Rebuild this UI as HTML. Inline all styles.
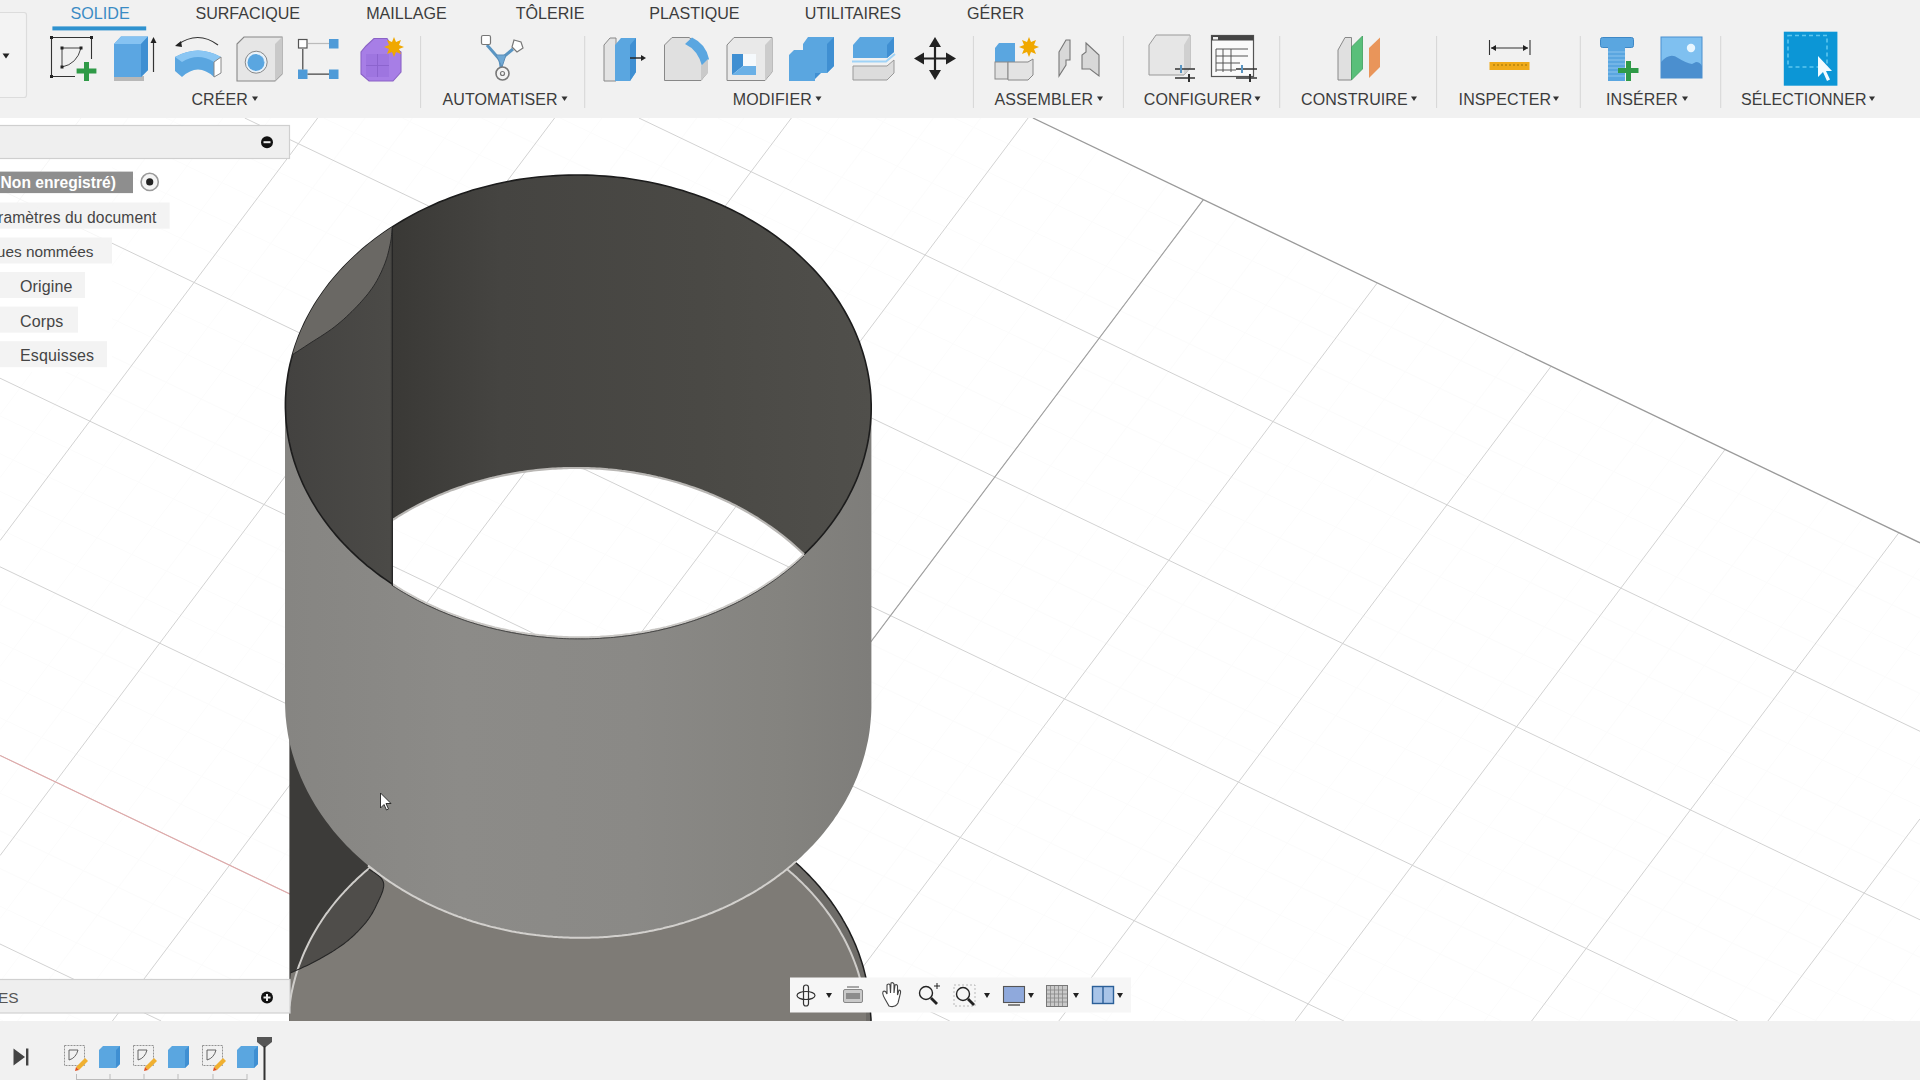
<!DOCTYPE html>
<html><head><meta charset="utf-8">
<style>
html,body{margin:0;padding:0;width:1920px;height:1080px;overflow:hidden;background:#f1f1f1;font-family:"Liberation Sans",sans-serif;}
svg{position:absolute;left:0;top:0;}
.t{font-family:"Liberation Sans",sans-serif;}
</style></head><body>
<svg width="1920" height="1080" viewBox="0 0 1920 1080">
<defs>
  <clipPath id="vp"><rect x="0" y="118" width="1920" height="903"/></clipPath>
  <clipPath id="holeclip"><path d="M392.6 519.9 L395.4 518.2 L398.1 516.4 L400.9 514.8 L403.6 513.1 L406.4 511.5 L409.2 509.9 L411.9 508.4 L414.7 506.9 L417.4 505.5 L420.2 504.1 L423 502.7 L425.7 501.3 L428.5 500 L431.3 498.7 L434 497.5 L436.8 496.3 L439.5 495.1 L442.3 493.9 L445.1 492.8 L447.8 491.7 L450.6 490.6 L453.3 489.6 L456.1 488.6 L458.9 487.6 L461.6 486.7 L464.4 485.7 L467.1 484.8 L469.9 483.9 L472.7 483.1 L475.4 482.3 L478.2 481.5 L481 480.7 L483.7 480 L486.5 479.2 L489.2 478.5 L492 477.9 L494.8 477.2 L497.5 476.6 L500.3 476 L503 475.4 L505.8 474.8 L508.6 474.3 L511.3 473.8 L514.1 473.3 L516.8 472.8 L519.6 472.4 L522.4 472 L525.1 471.6 L527.9 471.2 L530.7 470.8 L533.4 470.5 L536.2 470.2 L538.9 469.9 L541.7 469.6 L544.5 469.3 L547.2 469.1 L550 468.9 L552.7 468.7 L555.5 468.6 L558.3 468.4 L561 468.3 L563.8 468.2 L566.5 468.1 L569.3 468 L572.1 468 L574.8 468 L577.6 468 L580.4 468 L583.1 468.1 L585.9 468.1 L588.6 468.2 L591.4 468.3 L594.2 468.4 L596.9 468.6 L599.7 468.7 L602.4 468.9 L605.2 469.1 L608 469.4 L610.7 469.6 L613.5 469.9 L616.2 470.2 L619 470.5 L621.8 470.9 L624.5 471.2 L627.3 471.6 L630.1 472 L632.8 472.4 L635.6 472.9 L638.3 473.3 L641.1 473.8 L643.9 474.3 L646.6 474.9 L649.4 475.4 L652.1 476 L654.9 476.6 L657.7 477.3 L660.4 477.9 L663.2 478.6 L665.9 479.3 L668.7 480 L671.5 480.8 L674.2 481.5 L677 482.3 L679.8 483.1 L682.5 484 L685.3 484.9 L688 485.8 L690.8 486.7 L693.6 487.6 L696.3 488.6 L699.1 489.6 L701.8 490.6 L704.6 491.7 L707.4 492.8 L710.1 493.9 L712.9 495.1 L715.6 496.2 L718.4 497.4 L721.2 498.7 L723.9 499.9 L726.7 501.2 L729.5 502.6 L732.2 503.9 L735 505.3 L737.7 506.8 L740.5 508.2 L743.3 509.7 L746 511.3 L748.8 512.9 L751.5 514.5 L754.3 516.1 L757.1 517.8 L759.8 519.6 L762.6 521.4 L765.3 523.2 L768.1 525.1 L770.9 527 L773.6 529 L776.4 531 L779.2 533.1 L781.9 535.2 L784.7 537.4 L787.4 539.6 L790.2 541.9 L793 544.3 L795.7 546.7 L798.5 549.2 L801.2 551.8 L804 554.4 L804 554.4 L801.2 557 L798.5 559.5 L795.7 562 L793 564.3 L790.2 566.7 L787.4 568.9 L784.7 571.1 L781.9 573.2 L779.2 575.3 L776.4 577.3 L773.6 579.3 L770.9 581.2 L768.1 583 L765.3 584.9 L762.6 586.6 L759.8 588.4 L757.1 590.1 L754.3 591.7 L751.5 593.3 L748.8 594.9 L746 596.4 L743.3 597.9 L740.5 599.4 L737.7 600.8 L735 602.2 L732.2 603.5 L729.5 604.8 L726.7 606.1 L723.9 607.4 L721.2 608.6 L718.4 609.8 L715.6 611 L712.9 612.1 L710.1 613.2 L707.4 614.3 L704.6 615.3 L701.8 616.3 L699.1 617.3 L696.3 618.3 L693.6 619.2 L690.8 620.1 L688 621 L685.3 621.9 L682.5 622.7 L679.8 623.5 L677 624.3 L674.2 625 L671.5 625.8 L668.7 626.5 L665.9 627.2 L663.2 627.8 L660.4 628.5 L657.7 629.1 L654.9 629.7 L652.1 630.2 L649.4 630.8 L646.6 631.3 L643.9 631.8 L641.1 632.3 L638.3 632.7 L635.6 633.2 L632.8 633.6 L630.1 634 L627.3 634.3 L624.5 634.7 L621.8 635 L619 635.3 L616.2 635.6 L613.5 635.9 L610.7 636.1 L608 636.3 L605.2 636.5 L602.4 636.7 L599.7 636.9 L596.9 637 L594.2 637.1 L591.4 637.2 L588.6 637.3 L585.9 637.4 L583.1 637.4 L580.4 637.4 L577.6 637.4 L574.8 637.4 L572.1 637.3 L569.3 637.3 L566.5 637.2 L563.8 637.1 L561 636.9 L558.3 636.8 L555.5 636.6 L552.7 636.4 L550 636.2 L547.2 636 L544.5 635.7 L541.7 635.4 L538.9 635.2 L536.2 634.8 L533.4 634.5 L530.7 634.1 L527.9 633.8 L525.1 633.4 L522.4 632.9 L519.6 632.5 L516.8 632 L514.1 631.5 L511.3 631 L508.6 630.5 L505.8 629.9 L503 629.3 L500.3 628.7 L497.5 628.1 L494.8 627.5 L492 626.8 L489.2 626.1 L486.5 625.4 L483.7 624.6 L481 623.9 L478.2 623.1 L475.4 622.3 L472.7 621.4 L469.9 620.6 L467.1 619.7 L464.4 618.8 L461.6 617.8 L458.9 616.8 L456.1 615.8 L453.3 614.8 L450.6 613.8 L447.8 612.7 L445.1 611.6 L442.3 610.4 L439.5 609.3 L436.8 608.1 L434 606.8 L431.3 605.6 L428.5 604.3 L425.7 603 L423 601.6 L420.2 600.2 L417.4 598.8 L414.7 597.3 L411.9 595.8 L409.2 594.3 L406.4 592.7 L403.6 591.1 L400.9 589.5 L398.1 587.8 L395.4 586 L392.6 584.3Z"/></clipPath>
  <linearGradient id="wallg" x1="285" y1="0" x2="871" y2="0" gradientUnits="userSpaceOnUse">
    <stop offset="0" stop-color="#868582"/>
    <stop offset="0.3" stop-color="#8c8b88"/>
    <stop offset="0.6" stop-color="#8a8986"/>
    <stop offset="0.85" stop-color="#84837f"/>
    <stop offset="1" stop-color="#7e7d7a"/>
  </linearGradient>
  <linearGradient id="topg" x1="285" y1="0" x2="871" y2="0" gradientUnits="userSpaceOnUse">
    <stop offset="0" stop-color="#434240"/>
    <stop offset="0.179" stop-color="#4b4a47"/>
    <stop offset="0.184" stop-color="#3a3936"/>
    <stop offset="0.367" stop-color="#454441"/>
    <stop offset="0.708" stop-color="#4a4945"/>
    <stop offset="1" stop-color="#504f4b"/>
  </linearGradient>
</defs>
<!-- viewport -->
<g clip-path="url(#vp)">
  <rect x="0" y="118" width="1920" height="903" fill="#ffffff"/>
  <g id="grid">
    <path d="M33.5 118L0 162.5M128.2 118L0 288.6M175.6 118L0 351.6M223 118L0 414.6M270.4 118L0 477.6M365.1 118L0 603.6M412.5 118L0 666.6M459.9 118L0 729.6M507.2 118L0 792.6M601.9 118L0 918.6M649.3 118L0 981.6M696.7 118L17.7 1021M744 118L65.1 1021M838.7 118L159.7 1021M886.1 118L207.1 1021M933.4 118L254.4 1021M980.7 118L301.7 1021M1064.2 133L396.4 1021M1099 149.6L443.7 1021M1133.8 166.3L491.1 1021M1168.6 183L538.4 1021M1238.1 216.3L633 1021M1272.9 232.9L680.3 1021M1307.7 249.6L727.6 1021M1342.5 266.3L775 1021M1412.1 299.6L869.6 1021M1446.9 316.2L916.9 1021M1481.7 332.9L964.2 1021M1516.4 349.6L1011.5 1021M1586 382.9L1106.1 1021M1620.8 399.5L1153.4 1021M1655.5 416.2L1200.6 1021M1690.3 432.8L1247.9 1021M1759.8 466.1L1342.5 1021M1794.6 482.8L1389.8 1021M1829.4 499.4L1437.1 1021M1864.1 516.1L1484.3 1021M1920 567.5L1578.9 1021M1920 630.3L1626.2 1021M1920 693.2L1673.4 1021M1920 756L1720.7 1021M1920 881.7L1815.2 1021M1920 944.5L1862.5 1021M1920 1007.3L1909.7 1021M954.1 118L1920 580.5M875.3 118L1920 618.2M796.5 118L1920 655.9M717.7 118L1920 693.6M560.1 118L1920 769M481.3 118L1920 806.7M402.4 118L1920 844.4M323.6 118L1920 882.1M165.9 118L1920 957.4M87 118L1920 995.1M8.2 118L1895.3 1021M0 151.8L1816.6 1021M0 227.3L1659 1021M0 265L1580.3 1021M0 302.8L1501.5 1021M0 340.5L1422.7 1021M0 415.9L1265.1 1021M0 453.7L1186.3 1021M0 491.4L1107.5 1021M0 529.1L1028.7 1021M0 604.6L871 1021M0 642.3L792.2 1021M0 680L713.3 1021M0 717.7L634.5 1021M0 793.1L476.8 1021M0 830.8L397.9 1021M0 868.5L319 1021M0 906.2L240.1 1021M0 981.7L82.3 1021M0 1019.4L3.4 1021" stroke="#fcfcfc" stroke-width="1" fill="none"/>
    <path d="M80.9 118L0 225.6M317.7 118L0 540.6M554.6 118L0 855.6M791.4 118L112.4 1021M1028.1 118L349.1 1021M1203.4 199.6L585.7 1021M1377.3 282.9L822.3 1021M1551.2 366.2L1058.8 1021M1725.1 449.5L1295.2 1021M1898.9 532.7L1531.6 1021M1920 818.8L1767.9 1021M638.9 118L1920 731.3M244.7 118L1920 919.8M0 189.6L1737.8 1021M0 378.2L1343.9 1021M0 566.8L949.8 1021M-0 755.4L555.6 1021M0 944L161.2 1021" stroke="#d2d2d2" stroke-width="1" fill="none"/>
    <path d="M1203.4 199.6L585.7 1021" stroke="#a0a0a0" stroke-width="1.1" fill="none"/>
    <path d="M-0 755.4L555.6 1021" stroke="#e0a8a8" stroke-width="1.1" fill="none"/>
    <path d="M1032.9 118L1920 542.8" stroke="#9a9a9a" stroke-width="1.3" fill="none"/>
  </g>
  <!-- lower body -->
  <path d="M289.4 700 L289.4 1021 L600 1021 L600 700Z" fill="#3c3b39"/>
  <path d="M289.4 1006.3 L291.3 994 L293.3 985.1 L295.2 977.7 L297.1 971.3 L299 965.6 L301 960.5 L302.9 955.7 L304.8 951.2 L306.8 947 L308.7 943 L310.6 939.3 L312.5 935.7 L314.5 932.3 L316.4 929 L318.3 925.8 L320.3 922.8 L322.2 919.8 L324.1 917 L326 914.2 L328 911.6 L329.9 909 L331.8 906.5 L333.8 904 L335.7 901.7 L337.6 899.4 L339.5 897.1 L341.5 894.9 L343.4 892.8 L345.3 890.7 L347.3 888.6 L349.2 886.6 L351.1 884.7 L353 882.7 L355 880.9 L356.9 879 L358.8 877.2 L360.8 875.5 L362.7 873.7 L364.6 872.1 L366.5 870.4 L368.5 868.8 L370.4 867.2 L372.3 865.6 L374.3 864.1 L376.2 862.6 L378.1 861.1 L380 859.6 L382 858.2 L383.9 856.8 L385.8 855.4 L387.7 854.1 L389.7 852.8 L391.6 851.5 L393.5 850.2 L395.5 848.9 L397.4 847.7 L399.3 846.5 L401.2 845.3 L403.2 844.1 L405.1 842.9 L407 841.8 L409 840.7 L410.9 839.6 L412.8 838.5 L414.7 837.5 L416.7 836.4 L418.6 835.4 L420.5 834.4 L422.5 833.4 L424.4 832.4 L426.3 831.5 L428.2 830.6 L430.2 829.6 L432.1 828.7 L434 827.8 L436 827 L437.9 826.1 L439.8 825.3 L441.7 824.4 L443.7 823.6 L445.6 822.8 L447.5 822.1 L449.5 821.3 L451.4 820.5 L453.3 819.8 L455.2 819.1 L457.2 818.4 L459.1 817.7 L461 817 L463 816.3 L464.9 815.6 L466.8 815 L468.7 814.4 L470.7 813.7 L472.6 813.1 L474.5 812.5 L476.5 812 L478.4 811.4 L480.3 810.8 L482.2 810.3 L484.2 809.8 L486.1 809.2 L488 808.7 L490 808.2 L491.9 807.8 L493.8 807.3 L495.7 806.8 L497.7 806.4 L499.6 805.9 L501.5 805.5 L503.5 805.1 L505.4 804.7 L507.3 804.3 L509.2 803.9 L511.2 803.6 L513.1 803.2 L515 802.9 L517 802.5 L518.9 802.2 L520.8 801.9 L522.7 801.6 L524.7 801.3 L526.6 801 L528.5 800.7 L530.5 800.5 L532.4 800.2 L534.3 800 L536.2 799.8 L538.2 799.5 L540.1 799.3 L542 799.1 L544 799 L545.9 798.8 L547.8 798.6 L549.7 798.5 L551.7 798.3 L553.6 798.2 L555.5 798.1 L557.5 798 L559.4 797.9 L561.3 797.8 L563.2 797.7 L565.2 797.6 L567.1 797.5 L569 797.5 L571 797.5 L572.9 797.4 L574.8 797.4 L576.7 797.4 L578.7 797.4 L580.6 797.4 L582.5 797.4 L584.4 797.5 L586.4 797.5 L588.3 797.6 L590.2 797.6 L592.2 797.7 L594.1 797.8 L596 797.9 L597.9 798 L599.9 798.1 L601.8 798.2 L603.7 798.4 L605.7 798.5 L607.6 798.7 L609.5 798.8 L611.4 799 L613.4 799.2 L615.3 799.4 L617.2 799.6 L619.2 799.8 L621.1 800 L623 800.3 L624.9 800.5 L626.9 800.8 L628.8 801.1 L630.7 801.3 L632.7 801.6 L634.6 801.9 L636.5 802.3 L638.4 802.6 L640.4 802.9 L642.3 803.3 L644.2 803.6 L646.2 804 L648.1 804.4 L650 804.8 L651.9 805.2 L653.9 805.6 L655.8 806 L657.7 806.5 L659.7 806.9 L661.6 807.4 L663.5 807.9 L665.4 808.3 L667.4 808.8 L669.3 809.4 L671.2 809.9 L673.2 810.4 L675.1 811 L677 811.5 L678.9 812.1 L680.9 812.7 L682.8 813.3 L684.7 813.9 L686.7 814.5 L688.6 815.1 L690.5 815.8 L692.4 816.4 L694.4 817.1 L696.3 817.8 L698.2 818.5 L700.2 819.2 L702.1 819.9 L704 820.7 L705.9 821.4 L707.9 822.2 L709.8 823 L711.7 823.8 L713.7 824.6 L715.6 825.4 L717.5 826.3 L719.4 827.1 L721.4 828 L723.3 828.9 L725.2 829.8 L727.2 830.7 L729.1 831.7 L731 832.6 L732.9 833.6 L734.9 834.6 L736.8 835.6 L738.7 836.6 L740.7 837.7 L742.6 838.7 L744.5 839.8 L746.4 840.9 L748.4 842 L750.3 843.2 L752.2 844.3 L754.2 845.5 L756.1 846.7 L758 847.9 L759.9 849.2 L761.9 850.4 L763.8 851.7 L765.7 853 L767.7 854.4 L769.6 855.7 L771.5 857.1 L773.4 858.5 L775.4 859.9 L777.3 861.4 L779.2 862.9 L781.1 864.4 L783.1 865.9 L785 867.5 L786.9 869.1 L788.9 870.7 L790.8 872.4 L792.7 874.1 L794.6 875.8 L796.6 877.6 L798.5 879.4 L800.4 881.2 L802.4 883.1 L804.3 885.1 L806.2 887 L808.1 889 L810.1 891.1 L812 893.2 L813.9 895.3 L815.9 897.6 L817.8 899.8 L819.7 902.2 L821.6 904.5 L823.6 907 L825.5 909.5 L827.4 912.1 L829.4 914.8 L831.3 917.6 L833.2 920.4 L835.1 923.4 L837.1 926.5 L839 929.6 L840.9 933 L842.9 936.4 L844.8 940 L846.7 943.8 L848.6 947.8 L850.6 952.1 L852.5 956.6 L854.4 961.5 L856.4 966.8 L858.3 972.6 L860.2 979.2 L862.1 986.8 L864.1 996.1 L866 1009.8 L866 1021 L289.4 1021Z" fill="#4f4d4a"/>
  <path d="M368.8 869 L369.4 869.4 L370.2 870 L371.2 870.6 L372.3 871.3 L373.5 872.1 L374.8 872.9 L376 873.7 L377.2 874.6 L378.4 875.5 L379.4 876.3 L380.3 877.2 L381 878 L381.6 878.8 L382.1 879.5 L382.5 880.2 L382.9 881 L383.2 881.7 L383.4 882.4 L383.6 883.2 L383.7 884 L383.7 884.9 L383.7 885.9 L383.6 886.9 L383.4 888 L383.1 889.2 L382.8 890.6 L382.3 892 L381.7 893.5 L381.1 895.1 L380.4 896.7 L379.7 898.3 L378.9 899.9 L378.2 901.5 L377.4 903.1 L376.7 904.6 L376 906 L375.3 907.4 L374.7 908.7 L374 909.9 L373.3 911.2 L372.7 912.4 L372 913.6 L371.3 914.8 L370.5 916 L369.7 917.2 L368.9 918.5 L368 919.7 L367 921 L366 922.3 L364.9 923.6 L363.7 925 L362.5 926.4 L361.3 927.7 L360 929.1 L358.7 930.5 L357.4 931.9 L356 933.2 L354.7 934.5 L353.3 935.8 L352 937 L350.7 938.2 L349.3 939.3 L348 940.5 L346.6 941.6 L345.3 942.6 L343.9 943.7 L342.5 944.7 L341 945.8 L339.5 946.8 L338 947.9 L336.4 948.9 L334.8 950 L333.1 951.1 L331.3 952.2 L329.5 953.3 L327.5 954.5 L325.6 955.6 L323.6 956.7 L321.7 957.8 L319.7 958.9 L317.7 960 L315.8 961 L313.9 962 L312 963 L310.1 964 L308.2 964.9 L306.1 965.9 L304.1 966.8 L302.1 967.8 L300.1 968.7 L298.2 969.5 L296.4 970.3 L294.7 971 L293.3 971.7 L292 972.2 L291 972.7 L289.6 985 L289.4 1021 L866 1021 L866 1009.8 L864.9 1001.2 L863.8 994.8 L862.7 989.4 L861.6 984.7 L860.6 980.4 L859.5 976.5 L858.4 972.9 L857.3 969.5 L856.2 966.3 L855.1 963.3 L854 960.4 L852.9 957.7 L851.8 955.1 L850.8 952.5 L849.7 950.1 L848.6 947.7 L847.5 945.4 L846.4 943.2 L845.3 941.1 L844.2 939 L843.1 936.9 L842.1 934.9 L841 933 L839.9 931.1 L838.8 929.3 L837.7 927.5 L836.6 925.7 L835.5 924 L834.4 922.3 L833.3 920.6 L832.3 919 L831.2 917.4 L830.1 915.8 L829 914.3 L827.9 912.8 L826.8 911.3 L825.7 909.8 L824.6 908.4 L823.5 907 L822.5 905.6 L821.4 904.2 L820.3 902.8 L819.2 901.5 L818.1 900.2 L817 898.9 L815.9 897.6 L814.8 896.4 L813.7 895.1 L812.7 893.9 L811.6 892.7 L810.5 891.5 L809.4 890.4 L808.3 889.2 L807.2 888.1 L806.1 886.9 L805 885.8 L803.9 884.7 L802.9 883.6 L801.8 882.5 L800.7 881.5 L799.6 880.4 L798.5 879.4 L797.4 878.4 L796.3 877.4 L795.2 876.4 L794.2 875.4 L793.1 874.4 L792 873.4 L790.9 872.5 L789.8 871.5 L788.7 870.6 L787.6 869.7 L786.5 868.8 L785.4 867.9 L784.4 867 L783.3 866.1 L782.2 865.2 L781.1 864.3 L780 863.5 L600 850 L368.8 850Z" fill="#7e7b76"/>
  <path d="M780 849.6 L781.5 850.8 L783.1 852 L784.6 853.2 L786.2 854.5 L787.7 855.7 L789.3 857 L790.8 858.3 L792.3 859.6 L793.9 861 L795.4 862.3 L797 863.7 L798.5 865.1 L800.1 866.5 L801.6 868 L803.1 869.5 L804.7 871 L806.2 872.5 L807.8 874.1 L809.3 875.6 L810.8 877.2 L812.4 878.9 L813.9 880.6 L815.5 882.3 L817 884 L818.6 885.8 L820.1 887.6 L821.6 889.4 L823.2 891.3 L824.7 893.2 L826.3 895.2 L827.8 897.2 L829.4 899.2 L830.9 901.3 L832.4 903.5 L834 905.7 L835.5 907.9 L837.1 910.3 L838.6 912.7 L840.2 915.1 L841.7 917.6 L843.2 920.3 L844.8 923 L846.3 925.8 L847.9 928.7 L849.4 931.7 L850.9 934.8 L852.5 938.1 L854 941.5 L855.6 945.1 L857.1 949 L858.7 953 L860.2 957.4 L861.7 962.1 L863.3 967.3 L864.8 973.1 L866.4 979.8 L867.9 987.9 L869.5 999.2 L871 1019 L871 1021 L866 1021 L866 1009.8 L864.4 997.9 L862.7 989.4 L861.1 982.6 L859.5 976.6 L857.9 971.3 L856.2 966.4 L854.6 962 L853 957.8 L851.4 953.9 L849.7 950.2 L848.1 946.7 L846.5 943.3 L844.8 940.1 L843.2 937.1 L841.6 934.1 L840 931.3 L838.3 928.5 L836.7 925.9 L835.1 923.3 L833.5 920.8 L831.8 918.4 L830.2 916 L828.6 913.7 L826.9 911.5 L825.3 909.3 L823.7 907.2 L822.1 905.1 L820.4 903 L818.8 901.1 L817.2 899.1 L815.6 897.2 L813.9 895.3 L812.3 893.5 L810.7 891.7 L809.1 890 L807.4 888.3 L805.8 886.6 L804.2 884.9 L802.5 883.3 L800.9 881.7 L799.3 880.1 L797.7 878.6 L796 877.1 L794.4 875.6 L792.8 874.2 L791.2 872.7 L789.5 871.3 L787.9 869.9 L786.3 868.6 L784.6 867.2 L783 865.9 L781.4 864.6 L779.8 863.3 L778.1 862 L776.5 860.8 L774.9 859.6 L773.3 858.4 L771.6 857.2 L770 856Z" fill="#6e6c68"/>
  <path d="M289.4 1006.3 L291.3 994 L293.3 985.1 L295.2 977.7 L297.1 971.3 L299 965.6 L301 960.5 L302.9 955.7 L304.8 951.2 L306.8 947 L308.7 943 L310.6 939.3 L312.5 935.7 L314.5 932.3 L316.4 929 L318.3 925.8 L320.3 922.8 L322.2 919.8 L324.1 917 L326 914.2 L328 911.6 L329.9 909 L331.8 906.5 L333.8 904 L335.7 901.7 L337.6 899.4 L339.5 897.1 L341.5 894.9 L343.4 892.8 L345.3 890.7 L347.3 888.6 L349.2 886.6 L351.1 884.7 L353 882.7 L355 880.9 L356.9 879 L358.8 877.2 L360.8 875.5 L362.7 873.7 L364.6 872.1 L366.5 870.4 L368.5 868.8 L370.4 867.2 L372.3 865.6 L374.3 864.1 L376.2 862.6 L378.1 861.1 L380 859.6 L382 858.2 L383.9 856.8 L385.8 855.4 L387.7 854.1 L389.7 852.8 L391.6 851.5 L393.5 850.2 L395.5 848.9 L397.4 847.7 L399.3 846.5 L401.2 845.3 L403.2 844.1 L405.1 842.9 L407 841.8 L409 840.7 L410.9 839.6 L412.8 838.5 L414.7 837.5 L416.7 836.4 L418.6 835.4 L420.5 834.4 L422.5 833.4 L424.4 832.4 L426.3 831.5 L428.2 830.6 L430.2 829.6 L432.1 828.7 L434 827.8 L436 827 L437.9 826.1 L439.8 825.3 L441.7 824.4 L443.7 823.6 L445.6 822.8 L447.5 822.1 L449.5 821.3 L451.4 820.5 L453.3 819.8 L455.2 819.1 L457.2 818.4 L459.1 817.7 L461 817 L463 816.3 L464.9 815.6 L466.8 815 L468.7 814.4 L470.7 813.7 L472.6 813.1 L474.5 812.5 L476.5 812 L478.4 811.4 L480.3 810.8 L482.2 810.3 L484.2 809.8 L486.1 809.2 L488 808.7 L490 808.2 L491.9 807.8 L493.8 807.3 L495.7 806.8 L497.7 806.4 L499.6 805.9 L501.5 805.5 L503.5 805.1 L505.4 804.7 L507.3 804.3 L509.2 803.9 L511.2 803.6 L513.1 803.2 L515 802.9 L517 802.5 L518.9 802.2 L520.8 801.9 L522.7 801.6 L524.7 801.3 L526.6 801 L528.5 800.7 L530.5 800.5 L532.4 800.2 L534.3 800 L536.2 799.8 L538.2 799.5 L540.1 799.3 L542 799.1 L544 799 L545.9 798.8 L547.8 798.6 L549.7 798.5 L551.7 798.3 L553.6 798.2 L555.5 798.1 L557.5 798 L559.4 797.9 L561.3 797.8 L563.2 797.7 L565.2 797.6 L567.1 797.5 L569 797.5 L571 797.5 L572.9 797.4 L574.8 797.4 L576.7 797.4 L578.7 797.4 L580.6 797.4 L582.5 797.4 L584.4 797.5 L586.4 797.5 L588.3 797.6 L590.2 797.6 L592.2 797.7 L594.1 797.8 L596 797.9 L597.9 798 L599.9 798.1 L601.8 798.2 L603.7 798.4 L605.7 798.5 L607.6 798.7 L609.5 798.8 L611.4 799 L613.4 799.2 L615.3 799.4 L617.2 799.6 L619.2 799.8 L621.1 800 L623 800.3 L624.9 800.5 L626.9 800.8 L628.8 801.1 L630.7 801.3 L632.7 801.6 L634.6 801.9 L636.5 802.3 L638.4 802.6 L640.4 802.9 L642.3 803.3 L644.2 803.6 L646.2 804 L648.1 804.4 L650 804.8 L651.9 805.2 L653.9 805.6 L655.8 806 L657.7 806.5 L659.7 806.9 L661.6 807.4 L663.5 807.9 L665.4 808.3 L667.4 808.8 L669.3 809.4 L671.2 809.9 L673.2 810.4 L675.1 811 L677 811.5 L678.9 812.1 L680.9 812.7 L682.8 813.3 L684.7 813.9 L686.7 814.5 L688.6 815.1 L690.5 815.8 L692.4 816.4 L694.4 817.1 L696.3 817.8 L698.2 818.5 L700.2 819.2 L702.1 819.9 L704 820.7 L705.9 821.4 L707.9 822.2 L709.8 823 L711.7 823.8 L713.7 824.6 L715.6 825.4 L717.5 826.3 L719.4 827.1 L721.4 828 L723.3 828.9 L725.2 829.8 L727.2 830.7 L729.1 831.7 L731 832.6 L732.9 833.6 L734.9 834.6 L736.8 835.6 L738.7 836.6 L740.7 837.7 L742.6 838.7 L744.5 839.8 L746.4 840.9 L748.4 842 L750.3 843.2 L752.2 844.3 L754.2 845.5 L756.1 846.7 L758 847.9 L759.9 849.2 L761.9 850.4 L763.8 851.7 L765.7 853 L767.7 854.4 L769.6 855.7 L771.5 857.1 L773.4 858.5 L775.4 859.9 L777.3 861.4 L779.2 862.9 L781.1 864.4 L783.1 865.9 L785 867.5 L786.9 869.1 L788.9 870.7 L790.8 872.4 L792.7 874.1 L794.6 875.8 L796.6 877.6 L798.5 879.4 L800.4 881.2 L802.4 883.1 L804.3 885.1 L806.2 887 L808.1 889 L810.1 891.1 L812 893.2 L813.9 895.3 L815.9 897.6 L817.8 899.8 L819.7 902.2 L821.6 904.5 L823.6 907 L825.5 909.5 L827.4 912.1 L829.4 914.8 L831.3 917.6 L833.2 920.4 L835.1 923.4 L837.1 926.5 L839 929.6 L840.9 933 L842.9 936.4 L844.8 940 L846.7 943.8 L848.6 947.8 L850.6 952.1 L852.5 956.6 L854.4 961.5 L856.4 966.8 L858.3 972.6 L860.2 979.2 L862.1 986.8 L864.1 996.1 L866 1009.8" stroke="#cfcdca" stroke-width="2" fill="none"/>
  <path d="M780 849.6 L781.5 850.8 L783.1 852 L784.6 853.2 L786.2 854.5 L787.7 855.7 L789.3 857 L790.8 858.3 L792.3 859.6 L793.9 861 L795.4 862.3 L797 863.7 L798.5 865.1 L800.1 866.5 L801.6 868 L803.1 869.5 L804.7 871 L806.2 872.5 L807.8 874.1 L809.3 875.6 L810.8 877.2 L812.4 878.9 L813.9 880.6 L815.5 882.3 L817 884 L818.6 885.8 L820.1 887.6 L821.6 889.4 L823.2 891.3 L824.7 893.2 L826.3 895.2 L827.8 897.2 L829.4 899.2 L830.9 901.3 L832.4 903.5 L834 905.7 L835.5 907.9 L837.1 910.3 L838.6 912.7 L840.2 915.1 L841.7 917.6 L843.2 920.3 L844.8 923 L846.3 925.8 L847.9 928.7 L849.4 931.7 L850.9 934.8 L852.5 938.1 L854 941.5 L855.6 945.1 L857.1 949 L858.7 953 L860.2 957.4 L861.7 962.1 L863.3 967.3 L864.8 973.1 L866.4 979.8 L867.9 987.9 L869.5 999.2 L871 1019 L871 1021" stroke="#1e1e1e" stroke-width="1.5" fill="none"/>
  <path d="M368.8 869 L369.4 869.4 L370.2 870 L371.2 870.6 L372.3 871.3 L373.5 872.1 L374.8 872.9 L376 873.7 L377.2 874.6 L378.4 875.5 L379.4 876.3 L380.3 877.2 L381 878 L381.6 878.8 L382.1 879.5 L382.5 880.2 L382.9 881 L383.2 881.7 L383.4 882.4 L383.6 883.2 L383.7 884 L383.7 884.9 L383.7 885.9 L383.6 886.9 L383.4 888 L383.1 889.2 L382.8 890.6 L382.3 892 L381.7 893.5 L381.1 895.1 L380.4 896.7 L379.7 898.3 L378.9 899.9 L378.2 901.5 L377.4 903.1 L376.7 904.6 L376 906 L375.3 907.4 L374.7 908.7 L374 909.9 L373.3 911.2 L372.7 912.4 L372 913.6 L371.3 914.8 L370.5 916 L369.7 917.2 L368.9 918.5 L368 919.7 L367 921 L366 922.3 L364.9 923.6 L363.7 925 L362.5 926.4 L361.3 927.7 L360 929.1 L358.7 930.5 L357.4 931.9 L356 933.2 L354.7 934.5 L353.3 935.8 L352 937 L350.7 938.2 L349.3 939.3 L348 940.5 L346.6 941.6 L345.3 942.6 L343.9 943.7 L342.5 944.7 L341 945.8 L339.5 946.8 L338 947.9 L336.4 948.9 L334.8 950 L333.1 951.1 L331.3 952.2 L329.5 953.3 L327.5 954.5 L325.6 955.6 L323.6 956.7 L321.7 957.8 L319.7 958.9 L317.7 960 L315.8 961 L313.9 962 L312 963 L310.1 964 L308.2 964.9 L306.1 965.9 L304.1 966.8 L302.1 967.8 L300.1 968.7 L298.2 969.5 L296.4 970.3 L294.7 971 L293.3 971.7 L292 972.2 L291 972.7" stroke="#262626" stroke-width="1.1" fill="none"/>
  <!-- wall -->
  <path d="M285 403.1 L285 698 L285 701.7 L285.1 705.4 L285.2 709.1 L285.4 712.7 L285.6 716.4 L286 720.1 L286.4 723.8 L286.9 727.5 L287.4 731.1 L288 734.8 L288.7 738.4 L289.5 742.1 L290.3 745.7 L291.2 749.3 L292.2 753 L293.3 756.6 L294.4 760.1 L295.6 763.7 L296.8 767.3 L298.2 770.8 L299.6 774.3 L301 777.8 L302.6 781.3 L304.2 784.8 L305.9 788.2 L307.6 791.7 L309.4 795.1 L311.3 798.5 L313.2 801.8 L315.2 805.2 L317.3 808.5 L319.4 811.7 L321.6 815 L323.9 818.2 L326.2 821.4 L328.6 824.6 L331 827.7 L333.5 830.9 L336.1 833.9 L338.7 837 L341.4 840 L344.1 843 L346.9 845.9 L349.8 848.8 L352.7 851.7 L355.7 854.5 L358.7 857.3 L361.8 860.1 L364.9 862.8 L368.1 865.5 L371.4 868.1 L374.7 870.7 L378 873.3 L381.4 875.8 L384.8 878.3 L388.3 880.7 L391.8 883.1 L395.4 885.5 L399 887.8 L402.7 890 L406.4 892.2 L410.2 894.4 L414 896.5 L417.8 898.6 L421.7 900.6 L425.6 902.6 L429.5 904.5 L433.5 906.3 L437.5 908.2 L441.6 909.9 L445.7 911.7 L449.8 913.3 L454 914.9 L458.2 916.5 L462.4 918 L466.6 919.5 L470.9 920.9 L475.2 922.2 L479.5 923.5 L483.9 924.8 L488.2 925.9 L492.6 927.1 L497 928.1 L501.5 929.2 L505.9 930.1 L510.4 931 L514.9 931.9 L519.4 932.7 L523.9 933.4 L528.5 934.1 L533 934.7 L537.6 935.3 L542.1 935.8 L546.7 936.3 L551.3 936.7 L555.9 937 L560.5 937.3 L565.1 937.5 L569.7 937.7 L574.3 937.8 L578.9 937.8 L583.5 937.8 L588.1 937.7 L592.7 937.6 L597.3 937.4 L601.9 937.2 L606.5 936.9 L611 936.5 L615.6 936.1 L620.2 935.6 L624.7 935.1 L629.3 934.5 L633.8 933.9 L638.3 933.2 L642.8 932.4 L647.3 931.6 L651.8 930.7 L656.2 929.8 L660.6 928.8 L665 927.8 L669.4 926.7 L673.8 925.5 L678.1 924.3 L682.5 923.1 L686.8 921.8 L691 920.4 L695.3 919 L699.5 917.5 L703.6 916 L707.8 914.4 L711.9 912.8 L716 911.1 L720 909.3 L724 907.6 L728 905.7 L732 903.8 L735.9 901.9 L739.7 899.9 L743.5 897.9 L747.3 895.8 L751.1 893.7 L754.8 891.5 L758.4 889.3 L762 887 L765.6 884.7 L769.1 882.3 L772.6 879.9 L776 877.5 L779.4 875 L782.7 872.4 L786 869.9 L789.2 867.3 L792.4 864.6 L795.5 861.9 L798.6 859.2 L801.6 856.4 L804.5 853.6 L807.4 850.7 L810.3 847.8 L813.1 844.9 L815.8 842 L818.5 839 L821.1 836 L823.6 832.9 L826.1 829.8 L828.5 826.7 L830.9 823.5 L833.2 820.4 L835.4 817.1 L837.6 813.9 L839.7 810.6 L841.8 807.3 L843.8 804 L845.7 800.7 L847.5 797.3 L849.3 793.9 L851 790.5 L852.7 787.1 L854.3 783.6 L855.8 780.1 L857.2 776.7 L858.6 773.1 L859.9 769.6 L861.2 766.1 L862.3 762.5 L863.4 758.9 L864.5 755.3 L865.4 751.7 L866.3 748.1 L867.1 744.5 L867.9 740.9 L868.6 737.2 L869.2 733.6 L869.7 729.9 L870.1 726.2 L870.5 722.6 L870.8 718.9 L871.1 715.2 L871.3 711.5 L871.4 707.8 L871.4 409.3 L871.2 409.3 L871.1 412.9 L871 416.5 L870.7 420.2 L870.5 423.8 L870.1 427.4 L869.7 431 L869.1 434.6 L868.6 438.2 L867.9 441.8 L867.2 445.4 L866.4 449 L865.5 452.5 L864.6 456.1 L863.6 459.6 L862.5 463.2 L861.4 466.7 L860.2 470.2 L858.9 473.6 L857.5 477.1 L856.1 480.6 L854.6 484 L853 487.4 L851.4 490.8 L849.7 494.2 L848 497.5 L846.1 500.8 L844.2 504.1 L842.3 507.4 L840.3 510.7 L838.2 513.9 L836 517.1 L833.8 520.3 L831.5 523.4 L829.2 526.5 L826.8 529.6 L824.3 532.7 L821.8 535.7 L819.2 538.7 L816.5 541.6 L813.8 544.6 L811.1 547.5 L808.2 550.3 L805.4 553.1 L802.4 555.9 L799.4 558.7 L796.4 561.4 L793.3 564.1 L790.1 566.7 L786.9 569.3 L783.7 571.8 L780.4 574.4 L777 576.8 L773.6 579.3 L770.2 581.6 L766.7 584 L763.1 586.3 L759.5 588.5 L755.9 590.8 L752.2 592.9 L748.5 595 L744.7 597.1 L740.9 599.1 L737.1 601.1 L733.2 603 L729.3 604.9 L725.3 606.8 L721.3 608.5 L717.3 610.3 L713.2 612 L709.1 613.6 L705 615.2 L700.8 616.7 L696.6 618.2 L692.4 619.6 L688.1 621 L683.9 622.3 L679.6 623.5 L675.2 624.8 L670.9 625.9 L666.5 627 L662.1 628.1 L657.7 629.1 L653.2 630 L648.8 630.9 L644.3 631.7 L639.8 632.5 L635.3 633.2 L630.8 633.9 L626.3 634.5 L621.7 635 L617.2 635.5 L612.6 635.9 L608 636.3 L603.5 636.6 L598.9 636.9 L594.3 637.1 L589.7 637.3 L585.1 637.4 L580.5 637.4 L575.9 637.4 L571.3 637.3 L566.7 637.2 L562.1 637 L557.5 636.7 L552.9 636.4 L548.3 636.1 L543.8 635.7 L539.2 635.2 L534.6 634.6 L530.1 634.1 L525.6 633.4 L521 632.7 L516.5 632 L512 631.2 L507.6 630.3 L503.1 629.4 L498.7 628.4 L494.3 627.4 L489.9 626.3 L485.5 625.1 L481.1 623.9 L476.8 622.7 L472.5 621.4 L468.2 620 L464 618.6 L459.8 617.2 L455.6 615.6 L451.4 614.1 L447.3 612.5 L443.2 610.8 L439.1 609.1 L435.1 607.3 L431.1 605.5 L427.1 603.6 L423.2 601.7 L419.3 599.8 L415.5 597.7 L411.7 595.7 L407.9 593.6 L404.2 591.4 L400.5 589.2 L396.9 587 L393.3 584.7 L389.7 582.4 L386.2 580 L382.8 577.6 L379.4 575.1 L376 572.6 L372.7 570.1 L369.5 567.5 L366.3 564.9 L363.1 562.2 L360 559.5 L357 556.8 L354 554 L351.1 551.2 L348.2 548.4 L345.4 545.5 L342.6 542.6 L339.9 539.6 L337.3 536.6 L334.7 533.6 L332.2 530.6 L329.7 527.5 L327.3 524.4 L325 521.2 L322.7 518.1 L320.5 514.9 L318.3 511.7 L316.2 508.4 L314.2 505.2 L312.3 501.9 L310.4 498.5 L308.5 495.2 L306.8 491.8 L305.1 488.5 L303.5 485 L301.9 481.6 L300.4 478.2 L299 474.7 L297.7 471.2 L296.4 467.8 L295.2 464.2 L294 460.7 L292.9 457.2 L291.9 453.6 L291 450.1 L290.2 446.5 L289.4 442.9 L288.6 439.3 L288 435.7 L287.4 432.1 L286.9 428.5 L286.5 424.9 L286.1 421.3 L285.8 417.7 L285.6 414 L285.5 410.4 L285.4 406.8 L285.4 403.1Z" fill="url(#wallg)"/>
  <path d="M368 865.4 L370.2 867.2 L372.3 868.9 L374.5 870.6 L376.6 872.3 L378.8 873.9 L380.9 875.5 L383.1 877 L385.2 878.6 L387.4 880.1 L389.5 881.6 L391.7 883 L393.8 884.4 L396 885.8 L398.1 887.2 L400.3 888.5 L402.4 889.8 L404.6 891.1 L406.7 892.4 L408.9 893.7 L411 894.9 L413.2 896.1 L415.3 897.2 L417.5 898.4 L419.6 899.5 L421.8 900.6 L423.9 901.7 L426.1 902.8 L428.2 903.8 L430.4 904.9 L432.5 905.9 L434.7 906.9 L436.8 907.8 L439 908.8 L441.1 909.7 L443.3 910.6 L445.4 911.5 L447.6 912.4 L449.7 913.3 L451.9 914.1 L454 915 L456.2 915.8 L458.3 916.6 L460.5 917.3 L462.6 918.1 L464.8 918.8 L466.9 919.6 L469.1 920.3 L471.2 921 L473.4 921.7 L475.5 922.3 L477.7 923 L479.8 923.6 L482 924.2 L484.1 924.8 L486.3 925.4 L488.4 926 L490.6 926.6 L492.7 927.1 L494.9 927.6 L497 928.1 L499.2 928.6 L501.3 929.1 L503.5 929.6 L505.6 930.1 L507.8 930.5 L509.9 930.9 L512.1 931.4 L514.3 931.8 L516.4 932.2 L518.6 932.5 L520.7 932.9 L522.9 933.3 L525 933.6 L527.2 933.9 L529.3 934.2 L531.5 934.5 L533.6 934.8 L535.8 935.1 L537.9 935.3 L540.1 935.6 L542.2 935.8 L544.4 936 L546.5 936.2 L548.7 936.4 L550.8 936.6 L553 936.8 L555.1 936.9 L557.3 937.1 L559.4 937.2 L561.6 937.3 L563.7 937.4 L565.9 937.5 L568 937.6 L570.2 937.7 L572.3 937.7 L574.5 937.8 L576.6 937.8 L578.8 937.8 L580.9 937.8 L583.1 937.8 L585.2 937.8 L587.4 937.8 L589.5 937.7 L591.7 937.6 L593.8 937.6 L596 937.5 L598.1 937.4 L600.3 937.3 L602.4 937.2 L604.6 937 L606.7 936.9 L608.9 936.7 L611 936.5 L613.2 936.3 L615.3 936.1 L617.5 935.9 L619.6 935.7 L621.8 935.5 L623.9 935.2 L626.1 934.9 L628.2 934.7 L630.4 934.4 L632.5 934.1 L634.7 933.7 L636.8 933.4 L639 933.1 L641.1 932.7 L643.3 932.3 L645.4 932 L647.6 931.6 L649.7 931.1 L651.9 930.7 L654.1 930.3 L656.2 929.8 L658.4 929.3 L660.5 928.9 L662.7 928.4 L664.8 927.8 L667 927.3 L669.1 926.8 L671.3 926.2 L673.4 925.7 L675.6 925.1 L677.7 924.5 L679.9 923.8 L682 923.2 L684.2 922.6 L686.3 921.9 L688.5 921.2 L690.6 920.5 L692.8 919.8 L694.9 919.1 L697.1 918.4 L699.2 917.6 L701.4 916.8 L703.5 916 L705.7 915.2 L707.8 914.4 L710 913.5 L712.1 912.7 L714.3 911.8 L716.4 910.9 L718.6 910 L720.7 909 L722.9 908.1 L725 907.1 L727.2 906.1 L729.3 905.1 L731.5 904.1 L733.6 903 L735.8 901.9 L737.9 900.8 L740.1 899.7 L742.2 898.6 L744.4 897.4 L746.5 896.2 L748.7 895 L750.8 893.8 L753 892.6 L755.1 891.3 L757.3 890 L759.4 888.6 L761.6 887.3 L763.7 885.9 L765.9 884.5 L768 883.1 L770.2 881.6 L772.3 880.1 L774.5 878.6 L776.6 877 L778.8 875.4 L780.9 873.8 L783.1 872.2 L785.2 870.5 L787.4 868.7 L789.5 867 L791.7 865.2 L793.8 863.3 L796 861.5" stroke="#d2d0cd" stroke-width="2" fill="none"/>
  <!-- interior -->
  <path d="M871.2 409.3 L871.1 414.1 L870.8 418.9 L870.5 423.8 L870 428.6 L869.3 433.4 L868.6 438.2 L867.7 443 L866.7 447.8 L865.5 452.5 L864.3 457.3 L862.9 462 L861.4 466.7 L859.7 471.3 L858 476 L856.1 480.6 L854.1 485.1 L852 489.7 L849.7 494.2 L847.4 498.6 L844.9 503 L842.3 507.4 L839.6 511.7 L836.7 516 L833.8 520.3 L830.7 524.4 L827.6 528.6 L824.3 532.7 L820.9 536.7 L817.4 540.7 L813.8 544.6 L810.1 548.4 L806.3 552.2 L802.4 555.9 L798.4 559.6 L794.3 563.2 L790.1 566.7 L785.9 570.1 L781.5 573.5 L777 576.8 L772.5 580.1 L767.8 583.2 L763.1 586.3 L758.3 589.3 L753.4 592.2 L748.5 595 L743.5 597.8 L738.4 600.5 L733.2 603 L728 605.5 L722.6 607.9 L717.3 610.3 L711.8 612.5 L706.4 614.6 L700.8 616.7 L695.2 618.6 L689.6 620.5 L683.9 622.3 L678.1 624 L672.3 625.5 L666.5 627 L660.6 628.4 L654.7 629.7 L648.8 630.9 L642.8 632 L636.8 633 L630.8 633.9 L624.8 634.7 L618.7 635.4 L612.6 635.9 L606.5 636.4 L600.4 636.8 L594.3 637.1 L588.1 637.3 L582 637.4 L575.9 637.4 L569.7 637.3 L563.6 637.1 L557.5 636.7 L551.4 636.3 L545.3 635.8 L539.2 635.2 L533.1 634.5 L527.1 633.6 L521 632.7 L515 631.7 L509.1 630.6 L503.1 629.4 L497.2 628 L491.3 626.6 L485.5 625.1 L479.7 623.5 L473.9 621.8 L468.2 620 L462.6 618.1 L457 616.2 L451.4 614.1 L445.9 611.9 L440.5 609.7 L435.1 607.3 L429.8 604.9 L424.5 602.4 L419.3 599.8 L414.2 597.1 L409.2 594.3 L404.2 591.4 L399.3 588.5 L394.5 585.5 L389.7 582.4 L385.1 579.2 L380.5 576 L376 572.6 L371.7 569.2 L367.3 565.8 L363.1 562.2 L359 558.6 L355 554.9 L351.1 551.2 L347.3 547.4 L343.5 543.5 L339.9 539.6 L336.4 535.6 L333 531.6 L329.7 527.5 L326.5 523.3 L323.4 519.1 L320.5 514.9 L317.6 510.6 L314.9 506.2 L312.3 501.9 L309.8 497.4 L307.4 493 L305.1 488.5 L302.9 483.9 L300.9 479.3 L299 474.7 L297.2 470.1 L295.6 465.4 L294 460.7 L292.6 456 L291.3 451.3 L290.2 446.5 L289.1 441.7 L288.2 436.9 L287.4 432.1 L286.8 427.3 L286.2 422.5 L285.8 417.7 L285.6 412.8 L285.4 408 L285.4 403.1 L285.5 398.3 L285.8 393.5 L286.1 388.6 L286.6 383.8 L287.3 379 L288 374.2 L288.9 369.4 L289.9 364.6 L291.1 359.9 L292.3 355.1 L293.7 350.4 L295.2 345.7 L296.9 341.1 L298.6 336.4 L300.5 331.8 L302.5 327.3 L304.6 322.7 L306.9 318.2 L309.2 313.8 L311.7 309.4 L314.3 305 L317 300.7 L319.9 296.4 L322.8 292.1 L325.9 288 L329 283.8 L332.3 279.7 L335.7 275.7 L339.2 271.7 L342.8 267.8 L346.5 264 L350.3 260.2 L354.2 256.5 L358.2 252.8 L362.3 249.2 L366.5 245.7 L370.7 242.3 L375.1 238.9 L379.6 235.6 L384.1 232.3 L388.8 229.2 L393.5 226.1 L398.3 223.1 L403.2 220.2 L408.1 217.4 L413.1 214.6 L418.2 211.9 L423.4 209.4 L428.6 206.9 L434 204.5 L439.3 202.1 L444.8 199.9 L450.2 197.8 L455.8 195.7 L461.4 193.8 L467 191.9 L472.7 190.1 L478.5 188.4 L484.3 186.9 L490.1 185.4 L496 184 L501.9 182.7 L507.8 181.5 L513.8 180.4 L519.8 179.4 L525.8 178.5 L531.8 177.7 L537.9 177 L544 176.5 L550.1 176 L556.2 175.6 L562.3 175.3 L568.5 175.1 L574.6 175 L580.7 175 L586.9 175.1 L593 175.3 L599.1 175.7 L605.2 176.1 L611.3 176.6 L617.4 177.2 L623.5 177.9 L629.5 178.8 L635.6 179.7 L641.6 180.7 L647.5 181.8 L653.5 183 L659.4 184.4 L665.3 185.8 L671.1 187.3 L676.9 188.9 L682.7 190.6 L688.4 192.4 L694 194.3 L699.6 196.2 L705.2 198.3 L710.7 200.5 L716.1 202.7 L721.5 205.1 L726.8 207.5 L732.1 210 L737.3 212.6 L742.4 215.3 L747.4 218.1 L752.4 221 L757.3 223.9 L762.1 226.9 L766.9 230 L771.5 233.2 L776.1 236.4 L780.6 239.8 L784.9 243.2 L789.3 246.6 L793.5 250.2 L797.6 253.8 L801.6 257.5 L805.5 261.2 L809.3 265 L813.1 268.9 L816.7 272.8 L820.2 276.8 L823.6 280.8 L826.9 284.9 L830.1 289.1 L833.2 293.3 L836.1 297.5 L839 301.8 L841.7 306.2 L844.3 310.5 L846.8 315 L849.2 319.4 L851.5 323.9 L853.7 328.5 L855.7 333.1 L857.6 337.7 L859.4 342.3 L861 347 L862.6 351.7 L864 356.4 L865.3 361.1 L866.4 365.9 L867.5 370.7 L868.4 375.5 L869.2 380.3 L869.8 385.1 L870.4 389.9 L870.8 394.7 L871 399.6 L871.2 404.4 L871.2 409.3Z" fill="url(#topg)" stroke="#1c1c1c" stroke-width="1.6"/>
  <path d="M392.2 228.5 L392.1 229.6 L392 231 L391.8 232.7 L391.6 234.6 L391.4 236.7 L391.2 238.9 L390.8 241.1 L390.4 243.3 L389.9 245.6 L389.4 248 L388.8 250.5 L388.2 253 L387.5 255.7 L386.7 258.3 L385.8 261 L384.8 263.7 L383.7 266.4 L382.5 269.2 L381.3 272 L379.9 274.8 L378.5 277.6 L377 280.4 L375.4 283.2 L373.7 285.9 L371.9 288.5 L370 291.1 L368.1 293.7 L366 296.2 L363.9 298.7 L361.7 301.2 L359.4 303.8 L357 306.3 L354.5 308.9 L352 311.4 L349.3 314 L346.6 316.6 L343.8 319.2 L340.9 321.7 L337.9 324.2 L334.8 326.7 L331.5 329.2 L327.9 331.7 L324.2 334.2 L320.5 336.6 L316.7 339 L313.2 341.2 L309.9 343.3 L307 345.2 L304.4 346.9 L302 348.5 L299.8 349.9 L297.8 351.3 L296 352.4 L294.4 353.4 L293.1 354.3 L292 355 L290 364.3 L291.7 357.3 L293.5 351.2 L295.2 345.8 L296.9 340.9 L298.7 336.3 L300.4 332.1 L302.1 328.1 L303.9 324.4 L305.6 320.8 L307.3 317.4 L309.1 314.1 L310.8 311 L312.5 308 L314.3 305.1 L316 302.3 L317.7 299.6 L319.4 297 L321.2 294.5 L322.9 292 L324.6 289.6 L326.4 287.3 L328.1 285 L329.8 282.8 L331.6 280.6 L333.3 278.5 L335 276.5 L336.8 274.5 L338.5 272.5 L340.2 270.6 L342 268.7 L343.7 266.9 L345.4 265 L347.2 263.3 L348.9 261.5 L350.6 259.8 L352.4 258.2 L354.1 256.5 L355.8 254.9 L357.6 253.4 L359.3 251.8 L361 250.3 L362.8 248.8 L364.5 247.3 L366.2 245.9 L367.9 244.5 L369.7 243.1 L371.4 241.7 L373.1 240.4 L374.9 239.1 L376.6 237.8 L378.3 236.5 L380.1 235.2 L381.8 234 L383.5 232.7 L385.3 231.5 L387 230.4 L388.7 229.2 L390.5 228.1 L392.2 226.9Z" fill="#6a6864"/>
  <path d="M392.2 228.5 L392.1 229.6 L392 231 L391.8 232.7 L391.6 234.6 L391.4 236.7 L391.2 238.9 L390.8 241.1 L390.4 243.3 L389.9 245.6 L389.4 248 L388.8 250.5 L388.2 253 L387.5 255.7 L386.7 258.3 L385.8 261 L384.8 263.7 L383.7 266.4 L382.5 269.2 L381.3 272 L379.9 274.8 L378.5 277.6 L377 280.4 L375.4 283.2 L373.7 285.9 L371.9 288.5 L370 291.1 L368.1 293.7 L366 296.2 L363.9 298.7 L361.7 301.2 L359.4 303.8 L357 306.3 L354.5 308.9 L352 311.4 L349.3 314 L346.6 316.6 L343.8 319.2 L340.9 321.7 L337.9 324.2 L334.8 326.7 L331.5 329.2 L327.9 331.7 L324.2 334.2 L320.5 336.6 L316.7 339 L313.2 341.2 L309.9 343.3 L307 345.2 L304.4 346.9 L302 348.5 L299.8 349.9 L297.8 351.3 L296 352.4 L294.4 353.4 L293.1 354.3 L292 355" stroke="#2a2a2a" stroke-width="1" fill="none"/>
  <g clip-path="url(#holeclip)">
    <rect x="380" y="440" width="440" height="220" fill="#fff"/>
    <path d="M33.5 118L0 162.5M128.2 118L0 288.6M175.6 118L0 351.6M223 118L0 414.6M270.4 118L0 477.6M365.1 118L0 603.6M412.5 118L0 666.6M459.9 118L0 729.6M507.2 118L0 792.6M601.9 118L0 918.6M649.3 118L0 981.6M696.7 118L17.7 1021M744 118L65.1 1021M838.7 118L159.7 1021M886.1 118L207.1 1021M933.4 118L254.4 1021M980.7 118L301.7 1021M1064.2 133L396.4 1021M1099 149.6L443.7 1021M1133.8 166.3L491.1 1021M1168.6 183L538.4 1021M1238.1 216.3L633 1021M1272.9 232.9L680.3 1021M1307.7 249.6L727.6 1021M1342.5 266.3L775 1021M1412.1 299.6L869.6 1021M1446.9 316.2L916.9 1021M1481.7 332.9L964.2 1021M1516.4 349.6L1011.5 1021M1586 382.9L1106.1 1021M1620.8 399.5L1153.4 1021M1655.5 416.2L1200.6 1021M1690.3 432.8L1247.9 1021M1759.8 466.1L1342.5 1021M1794.6 482.8L1389.8 1021M1829.4 499.4L1437.1 1021M1864.1 516.1L1484.3 1021M1920 567.5L1578.9 1021M1920 630.3L1626.2 1021M1920 693.2L1673.4 1021M1920 756L1720.7 1021M1920 881.7L1815.2 1021M1920 944.5L1862.5 1021M1920 1007.3L1909.7 1021M954.1 118L1920 580.5M875.3 118L1920 618.2M796.5 118L1920 655.9M717.7 118L1920 693.6M560.1 118L1920 769M481.3 118L1920 806.7M402.4 118L1920 844.4M323.6 118L1920 882.1M165.9 118L1920 957.4M87 118L1920 995.1M8.2 118L1895.3 1021M0 151.8L1816.6 1021M0 227.3L1659 1021M0 265L1580.3 1021M0 302.8L1501.5 1021M0 340.5L1422.7 1021M0 415.9L1265.1 1021M0 453.7L1186.3 1021M0 491.4L1107.5 1021M0 529.1L1028.7 1021M0 604.6L871 1021M0 642.3L792.2 1021M0 680L713.3 1021M0 717.7L634.5 1021M0 793.1L476.8 1021M0 830.8L397.9 1021M0 868.5L319 1021M0 906.2L240.1 1021M0 981.7L82.3 1021M0 1019.4L3.4 1021" stroke="#fcfcfc" stroke-width="1" fill="none"/>
    <path d="M80.9 118L0 225.6M317.7 118L0 540.6M554.6 118L0 855.6M791.4 118L112.4 1021M1028.1 118L349.1 1021M1203.4 199.6L585.7 1021M1377.3 282.9L822.3 1021M1551.2 366.2L1058.8 1021M1725.1 449.5L1295.2 1021M1898.9 532.7L1531.6 1021M1920 818.8L1767.9 1021M638.9 118L1920 731.3M244.7 118L1920 919.8M0 189.6L1737.8 1021M0 378.2L1343.9 1021M0 566.8L949.8 1021M-0 755.4L555.6 1021M0 944L161.2 1021" stroke="#d2d2d2" stroke-width="1" fill="none"/>
    <path d="M1203.4 199.6L585.7 1021" stroke="#a0a0a0" stroke-width="1.1" fill="none"/>
  </g>
  <path d="M392.6 519.9 L395.4 518.2 L398.1 516.4 L400.9 514.8 L403.6 513.1 L406.4 511.5 L409.2 509.9 L411.9 508.4 L414.7 506.9 L417.4 505.5 L420.2 504.1 L423 502.7 L425.7 501.3 L428.5 500 L431.3 498.7 L434 497.5 L436.8 496.3 L439.5 495.1 L442.3 493.9 L445.1 492.8 L447.8 491.7 L450.6 490.6 L453.3 489.6 L456.1 488.6 L458.9 487.6 L461.6 486.7 L464.4 485.7 L467.1 484.8 L469.9 483.9 L472.7 483.1 L475.4 482.3 L478.2 481.5 L481 480.7 L483.7 480 L486.5 479.2 L489.2 478.5 L492 477.9 L494.8 477.2 L497.5 476.6 L500.3 476 L503 475.4 L505.8 474.8 L508.6 474.3 L511.3 473.8 L514.1 473.3 L516.8 472.8 L519.6 472.4 L522.4 472 L525.1 471.6 L527.9 471.2 L530.7 470.8 L533.4 470.5 L536.2 470.2 L538.9 469.9 L541.7 469.6 L544.5 469.3 L547.2 469.1 L550 468.9 L552.7 468.7 L555.5 468.6 L558.3 468.4 L561 468.3 L563.8 468.2 L566.5 468.1 L569.3 468 L572.1 468 L574.8 468 L577.6 468 L580.4 468 L583.1 468.1 L585.9 468.1 L588.6 468.2 L591.4 468.3 L594.2 468.4 L596.9 468.6 L599.7 468.7 L602.4 468.9 L605.2 469.1 L608 469.4 L610.7 469.6 L613.5 469.9 L616.2 470.2 L619 470.5 L621.8 470.9 L624.5 471.2 L627.3 471.6 L630.1 472 L632.8 472.4 L635.6 472.9 L638.3 473.3 L641.1 473.8 L643.9 474.3 L646.6 474.9 L649.4 475.4 L652.1 476 L654.9 476.6 L657.7 477.3 L660.4 477.9 L663.2 478.6 L665.9 479.3 L668.7 480 L671.5 480.8 L674.2 481.5 L677 482.3 L679.8 483.1 L682.5 484 L685.3 484.9 L688 485.8 L690.8 486.7 L693.6 487.6 L696.3 488.6 L699.1 489.6 L701.8 490.6 L704.6 491.7 L707.4 492.8 L710.1 493.9 L712.9 495.1 L715.6 496.2 L718.4 497.4 L721.2 498.7 L723.9 499.9 L726.7 501.2 L729.5 502.6 L732.2 503.9 L735 505.3 L737.7 506.8 L740.5 508.2 L743.3 509.7 L746 511.3 L748.8 512.9 L751.5 514.5 L754.3 516.1 L757.1 517.8 L759.8 519.6 L762.6 521.4 L765.3 523.2 L768.1 525.1 L770.9 527 L773.6 529 L776.4 531 L779.2 533.1 L781.9 535.2 L784.7 537.4 L787.4 539.6 L790.2 541.9 L793 544.3 L795.7 546.7 L798.5 549.2 L801.2 551.8 L804 554.4" stroke="#b9b7b4" stroke-width="2.2" fill="none"/>
  <path d="M804 554.4 L801.2 557 L798.5 559.5 L795.7 562 L793 564.3 L790.2 566.7 L787.4 568.9 L784.7 571.1 L781.9 573.2 L779.2 575.3 L776.4 577.3 L773.6 579.3 L770.9 581.2 L768.1 583 L765.3 584.9 L762.6 586.6 L759.8 588.4 L757.1 590.1 L754.3 591.7 L751.5 593.3 L748.8 594.9 L746 596.4 L743.3 597.9 L740.5 599.4 L737.7 600.8 L735 602.2 L732.2 603.5 L729.5 604.8 L726.7 606.1 L723.9 607.4 L721.2 608.6 L718.4 609.8 L715.6 611 L712.9 612.1 L710.1 613.2 L707.4 614.3 L704.6 615.3 L701.8 616.3 L699.1 617.3 L696.3 618.3 L693.6 619.2 L690.8 620.1 L688 621 L685.3 621.9 L682.5 622.7 L679.8 623.5 L677 624.3 L674.2 625 L671.5 625.8 L668.7 626.5 L665.9 627.2 L663.2 627.8 L660.4 628.5 L657.7 629.1 L654.9 629.7 L652.1 630.2 L649.4 630.8 L646.6 631.3 L643.9 631.8 L641.1 632.3 L638.3 632.7 L635.6 633.2 L632.8 633.6 L630.1 634 L627.3 634.3 L624.5 634.7 L621.8 635 L619 635.3 L616.2 635.6 L613.5 635.9 L610.7 636.1 L608 636.3 L605.2 636.5 L602.4 636.7 L599.7 636.9 L596.9 637 L594.2 637.1 L591.4 637.2 L588.6 637.3 L585.9 637.4 L583.1 637.4 L580.4 637.4 L577.6 637.4 L574.8 637.4 L572.1 637.3 L569.3 637.3 L566.5 637.2 L563.8 637.1 L561 636.9 L558.3 636.8 L555.5 636.6 L552.7 636.4 L550 636.2 L547.2 636 L544.5 635.7 L541.7 635.4 L538.9 635.2 L536.2 634.8 L533.4 634.5 L530.7 634.1 L527.9 633.8 L525.1 633.4 L522.4 632.9 L519.6 632.5 L516.8 632 L514.1 631.5 L511.3 631 L508.6 630.5 L505.8 629.9 L503 629.3 L500.3 628.7 L497.5 628.1 L494.8 627.5 L492 626.8 L489.2 626.1 L486.5 625.4 L483.7 624.6 L481 623.9 L478.2 623.1 L475.4 622.3 L472.7 621.4 L469.9 620.6 L467.1 619.7 L464.4 618.8 L461.6 617.8 L458.9 616.8 L456.1 615.8 L453.3 614.8 L450.6 613.8 L447.8 612.7 L445.1 611.6 L442.3 610.4 L439.5 609.3 L436.8 608.1 L434 606.8 L431.3 605.6 L428.5 604.3 L425.7 603 L423 601.6 L420.2 600.2 L417.4 598.8 L414.7 597.3 L411.9 595.8 L409.2 594.3 L406.4 592.7 L403.6 591.1 L400.9 589.5 L398.1 587.8 L395.4 586 L392.6 584.3" stroke="#c9c7c4" stroke-width="2.2" fill="none"/>
  <path d="M804 554.4 L801.2 557 L798.5 559.5 L795.7 562 L793 564.3 L790.2 566.7 L787.4 568.9 L784.7 571.1 L781.9 573.2 L779.2 575.3 L776.4 577.3 L773.6 579.3 L770.9 581.2 L768.1 583 L765.3 584.9 L762.6 586.6 L759.8 588.4 L757.1 590.1 L754.3 591.7 L751.5 593.3 L748.8 594.9 L746 596.4 L743.3 597.9 L740.5 599.4 L737.7 600.8 L735 602.2 L732.2 603.5 L729.5 604.8 L726.7 606.1 L723.9 607.4 L721.2 608.6 L718.4 609.8 L715.6 611 L712.9 612.1 L710.1 613.2 L707.4 614.3 L704.6 615.3 L701.8 616.3 L699.1 617.3 L696.3 618.3 L693.6 619.2 L690.8 620.1 L688 621 L685.3 621.9 L682.5 622.7 L679.8 623.5 L677 624.3 L674.2 625 L671.5 625.8 L668.7 626.5 L665.9 627.2 L663.2 627.8 L660.4 628.5 L657.7 629.1 L654.9 629.7 L652.1 630.2 L649.4 630.8 L646.6 631.3 L643.9 631.8 L641.1 632.3 L638.3 632.7 L635.6 633.2 L632.8 633.6 L630.1 634 L627.3 634.3 L624.5 634.7 L621.8 635 L619 635.3 L616.2 635.6 L613.5 635.9 L610.7 636.1 L608 636.3 L605.2 636.5 L602.4 636.7 L599.7 636.9 L596.9 637 L594.2 637.1 L591.4 637.2 L588.6 637.3 L585.9 637.4 L583.1 637.4 L580.4 637.4 L577.6 637.4 L574.8 637.4 L572.1 637.3 L569.3 637.3 L566.5 637.2 L563.8 637.1 L561 636.9 L558.3 636.8 L555.5 636.6 L552.7 636.4 L550 636.2 L547.2 636 L544.5 635.7 L541.7 635.4 L538.9 635.2 L536.2 634.8 L533.4 634.5 L530.7 634.1 L527.9 633.8 L525.1 633.4 L522.4 632.9 L519.6 632.5 L516.8 632 L514.1 631.5 L511.3 631 L508.6 630.5 L505.8 629.9 L503 629.3 L500.3 628.7 L497.5 628.1 L494.8 627.5 L492 626.8 L489.2 626.1 L486.5 625.4 L483.7 624.6 L481 623.9 L478.2 623.1 L475.4 622.3 L472.7 621.4 L469.9 620.6 L467.1 619.7 L464.4 618.8 L461.6 617.8 L458.9 616.8 L456.1 615.8 L453.3 614.8 L450.6 613.8 L447.8 612.7 L445.1 611.6 L442.3 610.4 L439.5 609.3 L436.8 608.1 L434 606.8 L431.3 605.6 L428.5 604.3 L425.7 603 L423 601.6 L420.2 600.2 L417.4 598.8 L414.7 597.3 L411.9 595.8 L409.2 594.3 L406.4 592.7 L403.6 591.1 L400.9 589.5 L398.1 587.8 L395.4 586 L392.6 584.3" stroke="#333" stroke-width="0.8" fill="none" transform="translate(0,1.5)"/>
  <line x1="392.4" y1="227" x2="392.4" y2="586" stroke="#262626" stroke-width="1.2"/>
  <!-- cursor -->
  <path d="M380.5 793 L380.5 808 L384 804.5 L386.5 810 L388.5 809 L386 803.5 L391 803.5 Z" fill="#fff" stroke="#222" stroke-width="0.9"/>
</g>

<!-- ========== TOOLBAR ========== -->
<g id="toolbar">
  <!-- left frame -->
  <path d="M-1 12.5 L24 12.5 Q26.5 12.5 26.5 15 L26.5 95 Q26.5 97.5 24 97.5 L-1 97.5" fill="#f3f3f3" stroke="#dcdcdc" stroke-width="1.2"/>
  <path d="M2.5 53.5 L9.5 53.5 L6 58.5 Z" fill="#222"/>
  <!-- tabs -->
  <g class="t" font-size="16.1" fill="#3c3c3c">
    <text x="70.6" y="18.8" fill="#3a8bc4">SOLIDE</text>
    <text x="195.4" y="18.8">SURFACIQUE</text>
    <text x="366.2" y="18.8">MAILLAGE</text>
    <text x="515.7" y="18.8">TÔLERIE</text>
    <text x="649.2" y="18.8">PLASTIQUE</text>
    <text x="804.8" y="18.8">UTILITAIRES</text>
    <text x="967" y="18.8">GÉRER</text>
  </g>
  <rect x="52.4" y="26.4" width="93.8" height="4" fill="#2f92cf"/>
  <!-- group labels -->
  <g class="t" font-size="16" letter-spacing="0.1" fill="#3c3c3c">
    <text x="191.4" y="105.4">CRÉER</text>
    <text x="442.5" y="105.4">AUTOMATISER</text>
    <text x="732.8" y="105.4">MODIFIER</text>
    <text x="994.4" y="105.4">ASSEMBLER</text>
    <text x="1143.8" y="105.4">CONFIGURER</text>
    <text x="1301" y="105.4">CONSTRUIRE</text>
    <text x="1458.6" y="105.4">INSPECTER</text>
    <text x="1606" y="105.4">INSÉRER</text>
    <text x="1741" y="105.4">SÉLECTIONNER</text>
  </g>
  <g fill="#333">
    <path d="M252 96.5 L258 96.5 L255 101 Z"/>
    <path d="M561.5 96.5 L567.5 96.5 L564.5 101 Z"/>
    <path d="M815.5 96.5 L821.5 96.5 L818.5 101 Z"/>
    <path d="M1097 96.5 L1103 96.5 L1100 101 Z"/>
    <path d="M1254.5 96.5 L1260.5 96.5 L1257.5 101 Z"/>
    <path d="M1411 96.5 L1417 96.5 L1414 101 Z"/>
    <path d="M1553 96.5 L1559 96.5 L1556 101 Z"/>
    <path d="M1682 96.5 L1688 96.5 L1685 101 Z"/>
    <path d="M1869 96.5 L1875 96.5 L1872 101 Z"/>
  </g>
  <!-- separators -->
  <g stroke="#d6d6d6" stroke-width="1">
    <line x1="420.6" y1="36" x2="420.6" y2="108"/>
    <line x1="584.7" y1="36" x2="584.7" y2="108"/>
    <line x1="973.4" y1="36" x2="973.4" y2="108"/>
    <line x1="1123.4" y1="36" x2="1123.4" y2="108"/>
    <line x1="1279.7" y1="36" x2="1279.7" y2="108"/>
    <line x1="1436.6" y1="36" x2="1436.6" y2="108"/>
    <line x1="1580.3" y1="36" x2="1580.3" y2="108"/>
    <line x1="1720.7" y1="36" x2="1720.7" y2="108"/>
  </g>
  <!-- sketch icon -->
<g>
  <path d="M51.5 37.5 H91.5 M51.5 37.5 V76.5 H75" stroke="#333" stroke-width="1.1" fill="none"/>
  <path d="M91.5 37.5 V59" stroke="#333" stroke-width="1.1" fill="none"/>
  <g fill="#222"><rect x="50" y="36" width="3" height="3"/><rect x="90" y="36" width="3" height="3"/><rect x="50" y="75" width="3" height="3"/></g>
  <path d="M62 48 H81 M62 48 V67 Q77 64 81 48" stroke="#444" stroke-width="1" fill="none"/>
  <g fill="#222"><rect x="60.5" y="46.5" width="3" height="3"/><rect x="79.5" y="46.5" width="3" height="3"/><rect x="60.5" y="65.5" width="3" height="3"/></g>
  <path d="M84 62 H89 V68.5 H96.4 V73.5 H89 V81 H84 V73.5 H76.6 V68.5 H84 Z" fill="#2f9a47"/>
</g>
<!-- extrude -->
<g>
  <rect x="114" y="76" width="30" height="5" fill="#b8b8b8"/>
  <path d="M114 44 L121 36.5 H148 V70 L141 77 H114 Z" fill="#5ba6e2"/>
  <path d="M114 44 L121 36.5 H148 L141 44 Z" fill="#86c3f2"/>
  <path d="M141 44 L148 36.5 V70 L141 77 Z" fill="#3f8fd2"/>
  <path d="M153.5 72 V40" stroke="#333" stroke-width="1.2"/>
  <path d="M150.5 43 L153.5 37 L156.5 43 Z" fill="#222"/>
</g>
<!-- revolve -->
<g>
  <path d="M175 57 Q198 44 221 57 L221 73 L214 77 Q198 62 182 77 L175 71 Z" fill="#5aa6e0"/>
  <path d="M175 57 Q198 44 221 57 L214 62 Q198 52 182 62 Z" fill="#8ac6f3"/>
  <path d="M214 62 L221 57 V73 L214 77 Z" fill="#fff" stroke="#888" stroke-width="1"/>
  <path d="M177 45 Q198 30 218 45" stroke="#333" stroke-width="1.2" fill="none"/>
  <path d="M175 46 L181 41 L182 47 Z" fill="#222"/>
</g>
<!-- hole -->
<g>
  <path d="M237 44 L244 37 H282 V74 L275 81 H237 Z" fill="#e6e6e6" stroke="#888" stroke-width="1.1"/>
  <path d="M275 44 L282 37 V74 L275 81 Z" fill="#c9c9c9"/>
  <circle cx="256.2" cy="62.2" r="11" fill="#e8f2fa" stroke="#888" stroke-width="1"/>
  <circle cx="256" cy="62.5" r="8.5" fill="#5aa6e0"/>
  <path d="M252 54 A9 9 0 0 1 264 63 A10 8 0 0 0 252 54Z" fill="#fff"/>
</g>
<!-- pattern -->
<g>
  <rect x="298.5" y="39.5" width="8.5" height="8.5" fill="#fff" stroke="#555" stroke-width="1.2"/>
  <rect x="329" y="39" width="9.5" height="9.5" fill="#4f9bd8"/>
  <rect x="298" y="69.5" width="9.5" height="9.5" fill="#4f9bd8"/>
  <rect x="329" y="69.5" width="9.5" height="9.5" fill="#4f9bd8"/>
  <path d="M308 43.5 H329" stroke="#bbb" stroke-width="1.2"/>
  <path d="M302.8 49 V69.5 M307.5 74.2 H329" stroke="#444" stroke-width="1.2"/>
</g>
<!-- purple -->
<g>
  <path d="M366 46 L374 38.5 H387 L392 46 L401 52 V72 L393 81 H369 L361 74 V52 Z" fill="#a77ee6" stroke="#8b63c6" stroke-width="1.1"/>
  <path d="M366 54 H389 V77 H366 Z" fill="#9a72dd" opacity="0.7"/>
  <path d="M377.5 54 V77 M366 65.5 H389" stroke="#8a62cc" stroke-width="0.9"/>
  <path d="M394 37 L396 42 L401 40 L399 45 L404 47 L399 49 L401 54 L396 52 L394 57 L392 52 L387 54 L389 49 L384 47 L389 45 L387 40 L392 42 Z" fill="#f0a800"/>
</g>
<!-- automatiser -->
<g>
  <path d="M487 45 L500 60 L513 49 M500 60 L502 73" stroke="#5a95c2" stroke-width="3" fill="none"/>
  <path d="M496 55 H506 L502 67 Z" fill="#6fa8d4" stroke="#5a8db8" stroke-width="1"/>
  <rect x="481.5" y="35.5" width="9" height="9" rx="1.5" fill="#fff" stroke="#777" stroke-width="1.2"/>
  <path d="M514 40 L521 42 L523 48 L517 52 L512 47 Z" fill="#fff" stroke="#777" stroke-width="1.2"/>
  <circle cx="502.5" cy="73.5" r="6.5" fill="#f3f3f3" stroke="#777" stroke-width="1.6"/>
  <circle cx="502.5" cy="73.5" r="2" fill="none" stroke="#777" stroke-width="1.2"/>
</g>
<!-- press pull -->
<g>
  <path d="M604 45 L610 38 H616 V81 H604 Z" fill="#e3e3e3" stroke="#888" stroke-width="1"/>
  <path d="M615 45 L621 38 H636 V72 L630 81 H615 Z" fill="#5aa6e0"/>
  <path d="M630 45 L636 38 V72 L630 81 Z" fill="#3f8fd2"/>
  <path d="M630 58 H643" stroke="#222" stroke-width="1.4"/>
  <path d="M641 55 L646 58 L641 61Z" fill="#222"/>
</g>
<!-- fillet -->
<g>
  <path d="M664.5 45 L672 37.5 H689 Q704 45 707 60 V73 L701 80.5 H664.5 Z" fill="#e0e0e0" stroke="#888" stroke-width="1"/>
  <path d="M685 44 L692 37.5 Q706 44 709 59 L702 66 Q698 50 685 44Z" fill="#5aa6e0"/>
  <path d="M701 66 L708 59 V73 L701 80.5 Z" fill="#cacaca"/>
</g>
<!-- shell -->
<g>
  <path d="M727 45 L734 37.5 H772 V72 L765 80.5 H727 Z" fill="#e9e9e9" stroke="#888" stroke-width="1"/>
  <path d="M765 45 L772 37.5 V72 L765 80.5 Z" fill="#cccccc"/>
  <rect x="732" y="54" width="24" height="21" fill="#f5f9fc"/>
  <path d="M732 54 H743 V66 L732 75 Z" fill="#3f8fd2"/>
  <path d="M732 75 L743 66 H756 V75 Z" fill="#6ab0e6"/>
</g>
<!-- combine -->
<g>
  <path d="M789 55 L794 50 H803 V81 H789 Z" fill="#5aa6e0"/>
  <path d="M803 44 L808 37 H834 V66 L827 73 H815 V81 H803 Z" fill="#5aa6e0"/>
  <path d="M827 44 L834 37 V66 L827 73 Z" fill="#3f8fd2"/>
  <path d="M815 73 L821 73 L815 79Z" fill="#3f8fd2"/>
</g>
<!-- split body -->
<g>
  <path d="M853 45 L860 37 H894 V52 L887 58 H853 Z" fill="#5aa6e0"/>
  <path d="M887 45 L894 37 V52 L887 58 Z" fill="#3f8fd2"/>
  <path d="M852 61.5 H886 L895 54" stroke="#9fd3f7" stroke-width="2" fill="none"/>
  <path d="M853 66 H887 L894 60 V73 L887 80 H853 Z" fill="#dcdcdc" stroke="#999" stroke-width="1"/>
</g>
<!-- move -->
<g fill="#222">
  <path d="M935 40 V76 M917 58.5 H953" stroke="#222" stroke-width="2.2"/>
  <path d="M929 47 L935 37 L941 47Z"/><path d="M929 70 L935 80 L941 70Z"/>
  <path d="M924 52.5 L914 58.5 L924 64.5Z"/><path d="M946 52.5 L956 58.5 L946 64.5Z"/>
</g>
<!-- assemble new component -->
<g>
  <path d="M995 48 L999 43 H1015 V62 H995 Z" fill="#5aa6e0"/>
  <rect x="995" y="62" width="13" height="17" fill="#e0e0e0" stroke="#888" stroke-width="1"/>
  <path d="M1008 62 H1028 L1033 59 V75 L1028 80 H1008 Z" fill="#e3e3e3" stroke="#888" stroke-width="1"/>
  <path d="M1029 37 L1031 42 L1036 40 L1034 45 L1039 47 L1034 49 L1036 54 L1031 52 L1029 57 L1027 52 L1022 54 L1024 49 L1019 47 L1024 45 L1022 40 L1027 42 Z" fill="#f0a800"/>
</g>
<!-- joint -->
<g fill="#d8d8d8" stroke="#777" stroke-width="1.1">
  <path d="M1059 52 L1066 40 H1070 V60 L1066 60 V65 L1059 76 Z"/>
  <path d="M1086 43 L1099 55 V76 L1090 69 H1082 V55 L1086 52 Z"/>
</g>
<!-- configure 1 -->
<g>
  <path d="M1149 45 L1156 35 H1190 V68 L1184 75 H1149 Z" fill="#e6e6e6" stroke="#999" stroke-width="1"/>
  <path d="M1184 45 L1190 35 V68 L1184 75 Z" fill="#d0d0d0"/>
  <path d="M1175 69 H1195 M1175 78 H1195" stroke="#333" stroke-width="1.6"/>
  <path d="M1181 65 V73" stroke="#5a95c2" stroke-width="2"/><path d="M1189 74 V82" stroke="#333" stroke-width="2"/>
</g>
<!-- configure table -->
<g>
  <rect x="1211.5" y="35.5" width="42" height="41" fill="#fafafa" stroke="#555" stroke-width="1.2"/>
  <rect x="1211.5" y="35.5" width="42" height="5" fill="#444"/>
  <rect x="1213" y="37" width="5" height="2.5" fill="#eee"/>
  <path d="M1216 49 H1248 M1216 56 H1248 M1216 63 H1240 M1216 70 H1236 M1216 49 V72 M1223 49 V72 M1231 49 V72" stroke="#555" stroke-width="1" fill="none"/>
  <path d="M1236 69 H1257 M1236 78 H1257" stroke="#333" stroke-width="1.6"/>
  <path d="M1242 65 V73" stroke="#5a95c2" stroke-width="2"/><path d="M1250 74 V82" stroke="#333" stroke-width="2"/>
</g>
<!-- construct -->
<g>
  <path d="M1338 50 L1345 37.5 H1351.5 V80 H1338 Z" fill="#e0e0e0" stroke="#888" stroke-width="1"/>
  <path d="M1351.5 47 L1362.5 36 V69 L1351.5 80 Z" fill="#59bf7a" stroke="#3e9e5c" stroke-width="0.8"/>
  <path d="M1369 48 L1380 37.5 V67 L1369 78 Z" fill="#e9955a"/>
</g>
<!-- inspect -->
<g>
  <path d="M1489.5 40 V55 M1530 40 V55 M1491 48 H1528" stroke="#333" stroke-width="1.1"/>
  <path d="M1496 45 L1491 48 L1496 51Z M1523 45 L1528 48 L1523 51Z" fill="#222"/>
  <rect x="1489.5" y="62" width="40" height="8" fill="#efaa1a"/>
  <path d="M1494 64 V66 M1498 64 V66 M1502 64 V66 M1506 64 V66 M1510 64 V66 M1514 64 V66 M1518 64 V66 M1522 64 V66 M1526 64 V66" stroke="#7a5a00" stroke-width="0.7"/>
</g>
<!-- insert bolt -->
<g>
  <rect x="1600.5" y="37.5" width="33" height="10" rx="2" fill="#5aa6e0" stroke="#3e88c6" stroke-width="1"/>
  <path d="M1608 47 H1625 V81 H1608 Z" fill="#5aa6e0"/>
  <path d="M1608 52 H1625 M1608 56 H1625 M1608 60 H1625 M1608 64 H1625 M1608 68 H1625 M1608 72 H1625 M1608 76 H1625" stroke="#8cc4ee" stroke-width="1.1"/>
  <path d="M1626 61 H1631 V68 H1638.5 V73 H1631 V81 H1626 V73 H1618 V68 H1626 Z" fill="#2f9a47"/>
</g>
<!-- insert image -->
<g>
  <rect x="1661" y="37" width="41" height="41" fill="#7fc0f0" stroke="#4a90cf" stroke-width="1"/>
  <path d="M1661 62 Q1670 52 1678 58 Q1686 63 1692 64 L1696 62 Q1700 62 1702 66 V78 H1661 Z" fill="#4b8fcf"/>
  <circle cx="1691" cy="48" r="4.2" fill="#e8f6ff"/>
</g>
<!-- select -->
<g>
  <rect x="1783.8" y="31.7" width="53.6" height="54" fill="#0c96d6"/>
  <path d="M1788 35.5 H1827 V67 H1788 Z" stroke="#5cc6ef" stroke-width="1.6" stroke-dasharray="4 3" fill="none"/>
  <path d="M1818 56 L1818 77 L1823 72 L1827 81 L1830 79.5 L1826 71 L1832 71 Z" fill="#f2fbff"/>
</g>

</g>

<!-- ========== BROWSER PANEL ========== -->
<g id="browser">
  <rect x="0" y="118" width="112" height="254" fill="#ffffff" opacity="0.8"/>
  <rect x="-1" y="125.5" width="290.5" height="33" fill="#efefef" stroke="#cfcfcf" stroke-width="1.2"/>
  <circle cx="267" cy="142.2" r="6" fill="#111"/>
  <rect x="263.5" y="141.2" width="7" height="2" fill="#eee"/>
  <rect x="0" y="171.6" width="133" height="21.5" fill="#8e8e8e"/>
  <text x="0.6" y="188.4" class="t" font-size="15.6" font-weight="bold" fill="#fff">Non enregistré)</text>
  <circle cx="149.7" cy="181.9" r="8.6" fill="#f4f4f4" stroke="#9a9a9a" stroke-width="1.6"/>
  <circle cx="149.7" cy="181.9" r="3.6" fill="#222"/>
  <rect x="0" y="202.5" width="169.6" height="26.2" fill="#f2f2f2" opacity="0.9"/>
  <text x="156.5" y="222.6" text-anchor="end" class="t" font-size="15.6" letter-spacing="0.12" fill="#454545">Paramètres du document</text>
  <rect x="0" y="237.5" width="112" height="26" fill="#f2f2f2" opacity="0.9"/>
  <text x="93.5" y="257.3" text-anchor="end" class="t" font-size="15.4" fill="#454545">Vues nommées</text>
  <rect x="0" y="272" width="85" height="26" fill="#f2f2f2" opacity="0.9"/>
  <text x="20" y="292" class="t" font-size="16" letter-spacing="0.15" fill="#454545">Origine</text>
  <rect x="0" y="306.6" width="78" height="26" fill="#f2f2f2" opacity="0.9"/>
  <text x="20" y="326.6" class="t" font-size="16" letter-spacing="0.15" fill="#454545">Corps</text>
  <rect x="0" y="341.2" width="107" height="26" fill="#f2f2f2" opacity="0.9"/>
  <text x="20" y="361.2" class="t" font-size="16" letter-spacing="0.15" fill="#454545">Esquisses</text>
</g>

<!-- ========== COMMENTS PANEL ========== -->
<g id="comments">
  <rect x="-1" y="979.5" width="291" height="33.5" fill="#efefef" stroke="#d0d0d0" stroke-width="1.2"/>
  <text x="-2" y="1002.5" class="t" font-size="15.5" fill="#555">ES</text>
  <circle cx="267" cy="997.5" r="6" fill="#111"/>
  <rect x="263.5" y="996.5" width="7" height="2" fill="#eee"/>
  <rect x="266" y="994" width="2" height="7" fill="#eee"/>
</g>

<!-- ========== NAV BAR ========== -->
<g id="nav">
  <rect x="790" y="977.5" width="341" height="35" fill="#f6f6f6"/>
  <g stroke="#333" fill="none" stroke-width="1.2">
  <!-- orbit -->
  <ellipse cx="806" cy="995.5" rx="9" ry="4"/>
  <rect x="803.5" y="985" width="5" height="21" rx="2.5"/>
</g>
<path d="M826 993 L832 993 L829 998Z" fill="#222"/>
<g>
  <rect x="843.5" y="989.5" width="19" height="13" rx="1.5" fill="#c9c9c9" stroke="#888" stroke-width="1"/>
  <rect x="846" y="993" width="14" height="6" fill="#8c8c8c"/>
  <path d="M847 987 H859" stroke="#666" stroke-width="1.1"/>
</g>
<path d="M885 999 Q881 992 884 991 Q886 991 887 994 L887 985 Q889 983 890 985 L890.5 993 L891 983 Q893 982 894 984 L894 993 L895 985 Q897 984 897.5 986 L897.5 995 L899 990 Q901 990 900.5 993 L898 1003 Q895 1008 889 1006 Z" fill="#fff" stroke="#444" stroke-width="1.1"/>
<g stroke="#222" fill="none">
  <circle cx="926" cy="993" r="6.5" stroke-width="1.4"/>
  <path d="M931 998 L937 1004" stroke-width="2.8"/>
  <path d="M934 986 H940 M937 983 V989" stroke-width="1"/>
</g>
<g stroke="#222" fill="none">
  <rect x="954" y="985" width="21" height="21" stroke="#aaa" stroke-width="0.8" stroke-dasharray="2 2"/>
  <circle cx="963" cy="994" r="6.5" stroke-width="1.4"/>
  <path d="M968 999 L974 1005" stroke-width="2.8"/>
</g>
<path d="M984 993 L990 993 L987 998Z" fill="#222"/>
<g>
  <rect x="1003.5" y="986.5" width="21" height="16" fill="#8fa9dc" stroke="#555" stroke-width="1.1"/>
  <path d="M1008 1005 H1020" stroke="#666" stroke-width="1.6"/>
</g>
<path d="M1028 993 L1034 993 L1031 998Z" fill="#222"/>
<g>
  <rect x="1046.5" y="985.5" width="21" height="21" fill="#c9c9c9" stroke="#777" stroke-width="1"/>
  <path d="M1050.5 986 V1006 M1054.5 986 V1006 M1058.5 986 V1006 M1062.5 986 V1006 M1047 990 H1067 M1047 994 H1067 M1047 998 H1067 M1047 1002 H1067" stroke="#888" stroke-width="0.8"/>
</g>
<path d="M1073 993 L1079 993 L1076 998Z" fill="#222"/>
<g>
  <rect x="1092.5" y="986.5" width="21" height="17" fill="#a8c4e8" stroke="#2b5f98" stroke-width="1.4"/>
  <path d="M1103 986.5 V1003.5" stroke="#2b5f98" stroke-width="1.4"/>
</g>
<path d="M1117 993 L1123 993 L1120 998Z" fill="#222"/>

</g>

<!-- ========== TIMELINE ========== -->
<g id="timeline">
  <path d="M13.5 1048.5 L25 1057 L13.5 1065.5 Z" fill="#444"/>
<rect x="26" y="1048.5" width="2.4" height="17" fill="#444"/>
<g id="tlsk">
  <rect x="64.5" y="1045.5" width="20" height="20" fill="none" stroke="#888" stroke-width="0.9" stroke-dasharray="2 1"/>
  <path d="M69 1050 H78 M69 1050 V1060 Q76 1058 78 1050" stroke="#555" stroke-width="0.9" fill="none"/>
  <path d="M76 1067 L85 1058 L88 1061 L79 1070 Z" fill="#f0b030"/>
  <path d="M76 1067 L79 1070 L75 1071Z" fill="#e05020"/>
</g>
<g id="tlex">
  <path d="M99 1050 L103 1046 H120 V1064 L116 1068 H99 Z" fill="#5aa6e0"/>
  <path d="M116 1050 L120 1046 V1064 L116 1068 Z" fill="#3f8fd2"/>
</g>
<g transform="translate(69,0)"><g>
  <rect x="64.5" y="1045.5" width="20" height="20" fill="none" stroke="#888" stroke-width="0.9" stroke-dasharray="2 1"/>
  <path d="M69 1050 H78 M69 1050 V1060 Q76 1058 78 1050" stroke="#555" stroke-width="0.9" fill="none"/>
  <path d="M76 1067 L85 1058 L88 1061 L79 1070 Z" fill="#f0b030"/>
  <path d="M76 1067 L79 1070 L75 1071Z" fill="#e05020"/>
</g></g>
<g transform="translate(69,0)"><g>
  <path d="M99 1050 L103 1046 H120 V1064 L116 1068 H99 Z" fill="#5aa6e0"/>
  <path d="M116 1050 L120 1046 V1064 L116 1068 Z" fill="#3f8fd2"/>
</g></g>
<g transform="translate(138,0)"><g>
  <rect x="64.5" y="1045.5" width="20" height="20" fill="none" stroke="#888" stroke-width="0.9" stroke-dasharray="2 1"/>
  <path d="M69 1050 H78 M69 1050 V1060 Q76 1058 78 1050" stroke="#555" stroke-width="0.9" fill="none"/>
  <path d="M76 1067 L85 1058 L88 1061 L79 1070 Z" fill="#f0b030"/>
  <path d="M76 1067 L79 1070 L75 1071Z" fill="#e05020"/>
</g></g>
<g transform="translate(138,0)"><g>
  <path d="M99 1050 L103 1046 H120 V1064 L116 1068 H99 Z" fill="#5aa6e0"/>
  <path d="M116 1050 L120 1046 V1064 L116 1068 Z" fill="#3f8fd2"/>
</g></g>
<path d="M257 1037 H272 V1042 L264.5 1048 L257 1042 Z" fill="#555"/>
<rect x="263.5" y="1046" width="2" height="34" fill="#333"/>
<g stroke="#bbb" stroke-width="1">
  <path d="M76.5 1074 V1080 M110 1074 V1080 M144 1074 V1080 M178 1074 V1080 M213 1074 V1080 M247 1074 V1080 M76.5 1079.5 H247"/>
</g>

</g>
</svg>
</body></html>
